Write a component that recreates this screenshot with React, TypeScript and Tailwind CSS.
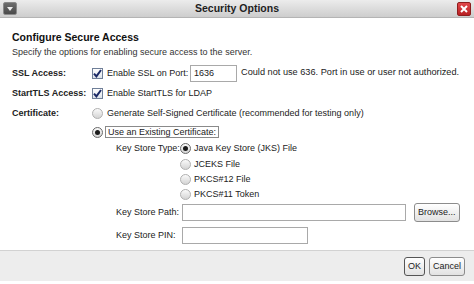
import React from "react";

function CheckBox() {
  return (
    <span className="flex h-[11px] w-[11px] shrink-0 items-center justify-center border border-[#6f7f98] bg-gradient-to-b from-white to-[#dde3ea]">
      <svg width="9" height="9" viewBox="0 0 9 9">
        <path d="M1 4.6 L3.4 7.4 L8 1" fill="none" stroke="#1c2a66" strokeWidth="2" />
      </svg>
    </span>
  );
}

function Radio({ on = false }: { on?: boolean }) {
  return (
    <span
      className={
        "flex h-[11px] w-[11px] shrink-0 items-center justify-center rounded-full border bg-gradient-to-b from-[#fafafa] to-[#d4d4d4] " +
        (on ? "border-[#6a6a6a]" : "border-[#b0b0b0]")
      }
    >
      {on && <span className="h-[5px] w-[5px] rounded-full bg-[#1a1a1a]" />}
    </span>
  );
}

function Field({ w }: { w: string }) {
  return <div className={"h-[17px] shrink-0 border border-[#a9a9a9] bg-white " + w} />;
}

function Btn({ children, focus = false }: { children: React.ReactNode; focus?: boolean }) {
  return (
    <button
      className={
        "flex h-[19px] items-center rounded-[3px] border bg-gradient-to-b from-white to-[#e2e2e2] px-[3px] text-[#222] " +
        (focus ? "border-[#555]" : "border-[#8c8c8c]")
      }
    >
      {children}
    </button>
  );
}

export default function App() {
  return (
    <div className="flex h-[284px] w-[474px] flex-col overflow-hidden whitespace-nowrap bg-white font-['Liberation_Sans',Arial,sans-serif] text-[9px] leading-none text-[#222]">
      {/* title bar */}
      <div className="flex h-[18px] shrink-0 items-center justify-between border-b border-[#b4b4b4] bg-gradient-to-b from-[#ececec] to-[#cdcdcd] px-[3px]">
        <span className="flex h-[13px] w-[14px] items-center justify-center rounded-[2px] border border-[#8a8a8a] bg-gradient-to-b from-[#6e6e6e] to-[#4a4a4a]">
          <svg width="6" height="4" viewBox="0 0 6 4">
            <path d="M0 0 H6 L3 4 Z" fill="#eee" />
          </svg>
        </span>
        <span className="text-[10.5px] font-bold text-[#1e1e1e]">Security Options</span>
        <span className="flex h-[14px] w-[14px] items-center justify-center rounded-[2px] border border-[#8e1d1d] bg-gradient-to-b from-[#e2474a] to-[#b81f23]">
          <svg width="8" height="8" viewBox="0 0 8 8">
            <path d="M1 1 L7 7 M7 1 L1 7" stroke="white" strokeWidth="2" />
          </svg>
        </span>
      </div>

      <div className="flex flex-col pl-[12px]">
        <div className="mt-[10px] flex h-[18px] items-center text-[10.5px] font-bold text-[#111]">
          Configure Secure Access
        </div>
        <div className="flex h-[13px] items-center text-[#333]">
          Specify the options for enabling secure access to the server.
        </div>

        {/* SSL */}
        <div className="mt-[4px] flex h-[20px] items-center">
          <span className="w-[80px] font-bold">SSL Access:</span>
          <CheckBox />
          <span className="ml-[4px] w-[83px]">Enable SSL on Port:</span>
          <div className="flex h-[17px] w-[47px] shrink-0 items-center border border-[#a9a9a9] bg-white pl-[3px]">1636</div>
          <span className="ml-[4px] text-[9.2px]">Could not use 636. Port in use or user not authorized.</span>
        </div>

        <div className="flex h-[20px] items-center">
          <span className="w-[80px] font-bold">StartTLS Access:</span>
          <CheckBox />
          <span className="ml-[4px]">Enable StartTLS for LDAP</span>
        </div>

        <div className="flex h-[21px] items-center">
          <span className="w-[80px] font-bold">Certificate:</span>
          <Radio />
          <span className="ml-[4px]">Generate Self-Signed Certificate (recommended for testing only)</span>
        </div>

        <div className="flex h-[16px] items-center pl-[80px]">
          <Radio on />
          <span className="ml-[2px] flex h-[12px] items-center border border-[#8a8a8a] px-[2px]">
            Use an Existing Certificate:
          </span>
        </div>

        {/* key store */}
        <div className="flex flex-col pl-[104px]">
          <div className="flex h-[16px] items-center">
            <span className="w-[64px]">Key Store Type:</span>
            <Radio on />
            <span className="ml-[3px]">Java Key Store (JKS) File</span>
          </div>
          <div className="flex h-[16px] items-center pl-[64px]">
            <Radio />
            <span className="ml-[3px]">JCEKS File</span>
          </div>
          <div className="flex h-[14px] items-center pl-[64px]">
            <Radio />
            <span className="ml-[3px]">PKCS#12 File</span>
          </div>
          <div className="flex h-[16px] items-center pl-[64px]">
            <Radio />
            <span className="ml-[3px]">PKCS#11 Token</span>
          </div>
          <div className="flex h-[21px] items-center">
            <span className="w-[66px]">Key Store Path:</span>
            <Field w="w-[224px]" />
            <div className="ml-[8px]">
              <Btn>Browse...</Btn>
            </div>
          </div>
          <div className="mt-[2px] flex h-[20px] items-center">
            <span className="w-[66px]">Key Store PIN:</span>
            <Field w="w-[126px]" />
          </div>
        </div>
      </div>

      {/* buttons */}
      <div className="mt-[5px] flex h-[31px] items-center justify-end gap-[4px] border-t border-[#d2d2d2] bg-[#ededed] pr-[9px]">
        <Btn focus>OK</Btn>
        <Btn>Cancel</Btn>
      </div>
    </div>
  );
}
